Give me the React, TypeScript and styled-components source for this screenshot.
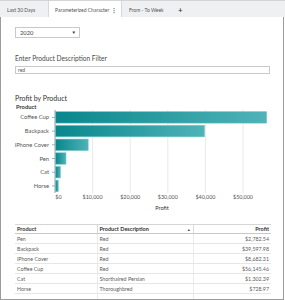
import React from 'react';
import styled, { createGlobalStyle } from 'styled-components';

const GlobalStyle = createGlobalStyle`
  html, body {
    margin: 0;
    padding: 0;
    background: #ffffff;
  }
  body {
    font-family: Lato, "Open Sans", "Liberation Sans", sans-serif;
    color: #333;
  }
`;

const Frame = styled.div`
  width: 285px;
  height: 300px;
  display: flex;
  flex-direction: column;
  overflow: hidden;
`;

const TabBar = styled.div`
  height: 16px;
  display: flex;
  align-items: stretch;
  background: #eff0f2;
  border-top: 1px solid #d4d4d6;
  flex-shrink: 0;
`;

const Tab = styled.div<{ $width: number; $active?: boolean }>`
  width: ${(p) => p.$width}px;
  box-sizing: border-box;
  display: flex;
  align-items: center;
  justify-content: space-between;
  padding: 1px 4px 0 6px;
  font-size: 5px;
  color: #555;
  white-space: nowrap;
  background: ${(p) => (p.$active ? '#ffffff' : 'transparent')};
  border-left: 1px solid ${(p) => (p.$active ? '#d8d8da' : 'transparent')};
  border-right: 1px solid ${(p) => (p.$active ? '#d8d8da' : 'transparent')};
`;

const Kebab = styled.span`
  font-size: 6px;
  color: #666;
  font-weight: 700;
`;

const AddTab = styled.div`
  display: flex;
  align-items: center;
  padding: 1px 0 0 10px;
  font-size: 8px;
  font-weight: 700;
  color: #444;
`;

const Panel = styled.div`
  flex: 1;
  min-height: 0;
  border-left: 1px solid #9c9c9c;
  border-right: 1px solid #9c9c9c;
  border-bottom: 1px solid #9c9c9c;
  width: 284px;
  box-sizing: border-box;
  padding: 10px 0 0 14px;
  overflow: hidden;
`;

const Select = styled.div`
  width: 65px;
  height: 11px;
  box-sizing: border-box;
  border: 1px solid #c9c9c9;
  display: flex;
  align-items: center;
  justify-content: space-between;
  padding: 0 3px 0 4px;
  font-size: 5.8px;
  color: #444;
`;

const Caret = styled.span`
  font-size: 4.5px;
  color: #333;
`;

const FieldLabel = styled.div`
  margin-top: 16px;
  font-size: 6.6px;
  line-height: 8px;
  color: #4a4a4a;
`;

const TextInput = styled.div`
  margin-top: 4px;
  width: 255px;
  height: 8px;
  box-sizing: border-box;
  border: 1px solid #c9c9c9;
  padding-left: 2px;
  font-size: 5px;
  line-height: 6px;
  color: #555;
`;

const Title = styled.div`
  margin-top: 20px;
  font-size: 7px;
  line-height: 9px;
  color: #333;
`;

const ChartSvg = styled.svg`
  display: block;
  margin-left: -1px;
  font-family: Lato, "Open Sans", "Liberation Sans", sans-serif;
`;

const Table = styled.table`
  margin-top: 11px;
  width: 256px;
  border-collapse: collapse;
  table-layout: fixed;
  font-size: 5.3px;
  color: #606060;
`;

const HeadCell = styled.th<{ $align?: 'left' | 'right' }>`
  height: 8px;
  padding: 0 2px;
  text-align: ${(p) => p.$align || 'left'};
  font-weight: 700;
  color: #333;
  font-size: 5.5px;
  border-top: 1px solid #d6d6d6;
  border-bottom: 1px solid #c8c8c8;
  border-left: 1px solid #dcdcdc;
  white-space: nowrap;
  &:first-child {
    border-left: none;
  }
`;

const HeadInner = styled.div`
  display: flex;
  justify-content: space-between;
  align-items: center;
`;

const SortArrow = styled.span`
  font-size: 3.6px;
  color: #333;
`;

const Cell = styled.td<{ $align?: 'left' | 'right' }>`
  height: 9px;
  padding: 0 2px 0 2px;
  text-align: ${(p) => p.$align || 'left'};
  border-bottom: 1px solid #e6e6e6;
  border-left: 1px solid #ececec;
  white-space: nowrap;
  &:first-child {
    border-left: none;
  }
`;

type Row = { product: string; desc: string; profit: number };

const chartData: Row[] = [
  { product: 'Coffee Cup', desc: 'Red', profit: 56145.46 },
  { product: 'Backpack', desc: 'Red', profit: 39597.98 },
  { product: 'iPhone Cover', desc: 'Red', profit: 8682.31 },
  { product: 'Pen', desc: 'Red', profit: 2782.54 },
  { product: 'Cat', desc: 'Shorthaired Persian', profit: 1302.39 },
  { product: 'Horse', desc: 'Thoroughbred', profit: 728.97 },
];

const tableOrder = ['Pen', 'Backpack', 'iPhone Cover', 'Coffee Cup', 'Cat', 'Horse'];

const money = (v: number) =>
  '$' + v.toLocaleString('en-US', { minimumFractionDigits: 2, maximumFractionDigits: 2 });

const ZERO = 41;
const SCALE = 37.6 / 10000;
const BAR_TOP = 8.7;
const PITCH = 13.7;
const BAR_H = 11.4;

const ProfitChart: React.FC = () => (
  <ChartSvg width={257} height={110} viewBox="0 0 257 110">
    <defs>
      <linearGradient id="bar" x1="0" y1="0" x2="1" y2="0">
        <stop offset="0" stopColor="#08878c" />
        <stop offset="1" stopColor="#4fb3b8" />
      </linearGradient>
    </defs>
    <text x={2} y={6} fontSize={5.8} fontWeight={700} fill="#333">
      Product
    </text>
    {[1, 2, 3, 4, 5].map((k) => (
      <line
        key={k}
        x1={ZERO + 37.6 * k}
        x2={ZERO + 37.6 * k}
        y1={7}
        y2={90}
        stroke="#e4e4e4"
        strokeWidth={0.8}
      />
    ))}
    <line x1={ZERO} x2={ZERO} y1={7} y2={90} stroke="#8a8a8a" strokeWidth={0.8} />
    {chartData.map((d, i) => {
      const y = BAR_TOP + i * PITCH;
      const cy = y + BAR_H / 2;
      return (
        <g key={d.product}>
          <line x1={ZERO - 3} x2={ZERO} y1={cy} y2={cy} stroke="#8a8a8a" strokeWidth={0.7} />
          <text x={35} y={cy + 2} fontSize={5.8} fill="#555" textAnchor="end">
            {d.product}
          </text>
          <rect
            x={ZERO + 0.5}
            y={y}
            width={d.profit * SCALE}
            height={BAR_H}
            fill="url(#bar)"
            stroke="#6cc3c7"
            strokeWidth={0.6}
          />
        </g>
      );
    })}
    {[0, 1, 2, 3, 4, 5].map((k) => (
      <text
        key={k}
        x={k === 0 ? ZERO + 3.5 : ZERO + 37.6 * k}
        y={96}
        fontSize={5.4}
        fill="#555"
        textAnchor="middle"
      >
        {k === 0 ? '$0' : `$${k * 10},000`}
      </text>
    ))}
    <text x={148} y={107} fontSize={5.6} fill="#333" textAnchor="middle">
      Profit
    </text>
  </ChartSvg>
);

const App: React.FC = () => {
  const rows = tableOrder.map((n) => chartData.find((d) => d.product === n) as Row);
  return (
    <Frame>
      <GlobalStyle />
      <TabBar>
        <Tab $width={48}>Last 30 Days</Tab>
        <Tab $width={74} $active>
          Parameterized Character
          <Kebab>⋮</Kebab>
        </Tab>
        <Tab $width={46}>From - To Week</Tab>
        <AddTab>+</AddTab>
      </TabBar>
      <Panel>
        <Select>
          2020
          <Caret>▼</Caret>
        </Select>
        <FieldLabel>Enter Product Description Filter</FieldLabel>
        <TextInput>red</TextInput>
        <Title>Profit by Product</Title>
        <ProfitChart />
        <Table>
          <colgroup>
            <col style={{ width: 82 }} />
            <col style={{ width: 96 }} />
            <col style={{ width: 78 }} />
          </colgroup>
          <thead>
            <tr>
              <HeadCell>Product</HeadCell>
              <HeadCell>
                <HeadInner>
                  Product Description
                  <SortArrow>▲</SortArrow>
                </HeadInner>
              </HeadCell>
              <HeadCell $align="right">Profit</HeadCell>
            </tr>
          </thead>
          <tbody>
            {rows.map((r) => (
              <tr key={r.product}>
                <Cell>{r.product}</Cell>
                <Cell>{r.desc}</Cell>
                <Cell $align="right">{money(r.profit)}</Cell>
              </tr>
            ))}
            <tr>
              <Cell />
              <Cell />
              <Cell />
            </tr>
          </tbody>
        </Table>
      </Panel>
    </Frame>
  );
};

export default App;
